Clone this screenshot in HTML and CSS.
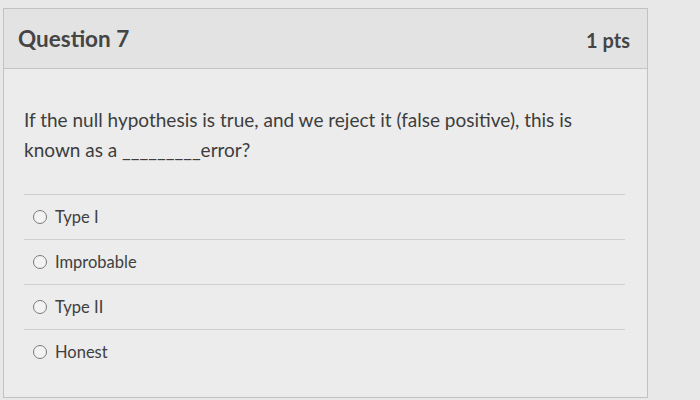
FILE: index.html
```html
<!DOCTYPE html>
<html>
<head>
<meta charset="utf-8">
<link rel="stylesheet" href="styles.css">
</head>
<body>
<div class="card">
  <div class="header">
    <span class="title">Question 7</span>
    <span class="pts">1 pts</span>
  </div>
  <div class="body">
    <p class="question">If the null hypothesis is true, and we reject it (false positive), this is known as a _________error?</p>
    <div class="answers">
      <div class="answer"><span class="radio"></span><span class="label">Type I</span></div>
      <div class="answer"><span class="radio"></span><span class="label">Improbable</span></div>
      <div class="answer"><span class="radio"></span><span class="label">Type II</span></div>
      <div class="answer"><span class="radio"></span><span class="label">Honest</span></div>
    </div>
  </div>
</div>
</body>
</html>
```
FILE: styles.css
```css
html, body {
  margin: 0;
  padding: 0;
}
body {
  background: #e8e8e8;
  font-family: Lato, "Noto Sans", sans-serif;
  color: #3f3f3f;
  width: 700px;
  height: 400px;
  overflow: hidden;
}
.card {
  margin: 8px 0 0 3px;
  width: 645px;
  height: 390px;
  border: 1px solid #c2c2c2;
  background: #ececec;
  box-sizing: border-box;
}
.header {
  height: 60px;
  box-sizing: border-box;
  background: #e3e3e3;
  border-bottom: 1px solid #c4c4c4;
  display: flex;
  justify-content: space-between;
  align-items: center;
  padding: 0 17px 0 14px;
}
.title {
  font-size: 22.5px;
  font-weight: 700;
  color: #454545;
}
.pts {
  font-size: 20px;
  font-weight: 700;
  color: #454545;
  padding-top: 2px;
}
.body {
  padding: 36px 22px 0 20px;
}
.question {
  margin: 0;
  font-size: 19px;
  line-height: 30px;
  width: 580px;
  color: #3d3d3d;
}
.answers {
  margin-top: 29px;
}
.answer {
  height: 45px;
  border-top: 1px solid #cfcfcf;
  display: flex;
  align-items: center;
  gap: 8px;
  padding-left: 9px;
  box-sizing: border-box;
}
.radio {
  width: 14px;
  height: 14px;
  border: 1.5px solid #7a7a7a;
  border-radius: 50%;
  background: #f3f3f3;
  box-sizing: border-box;
}
.label {
  font-size: 16.5px;
  color: #404040;
}
```
